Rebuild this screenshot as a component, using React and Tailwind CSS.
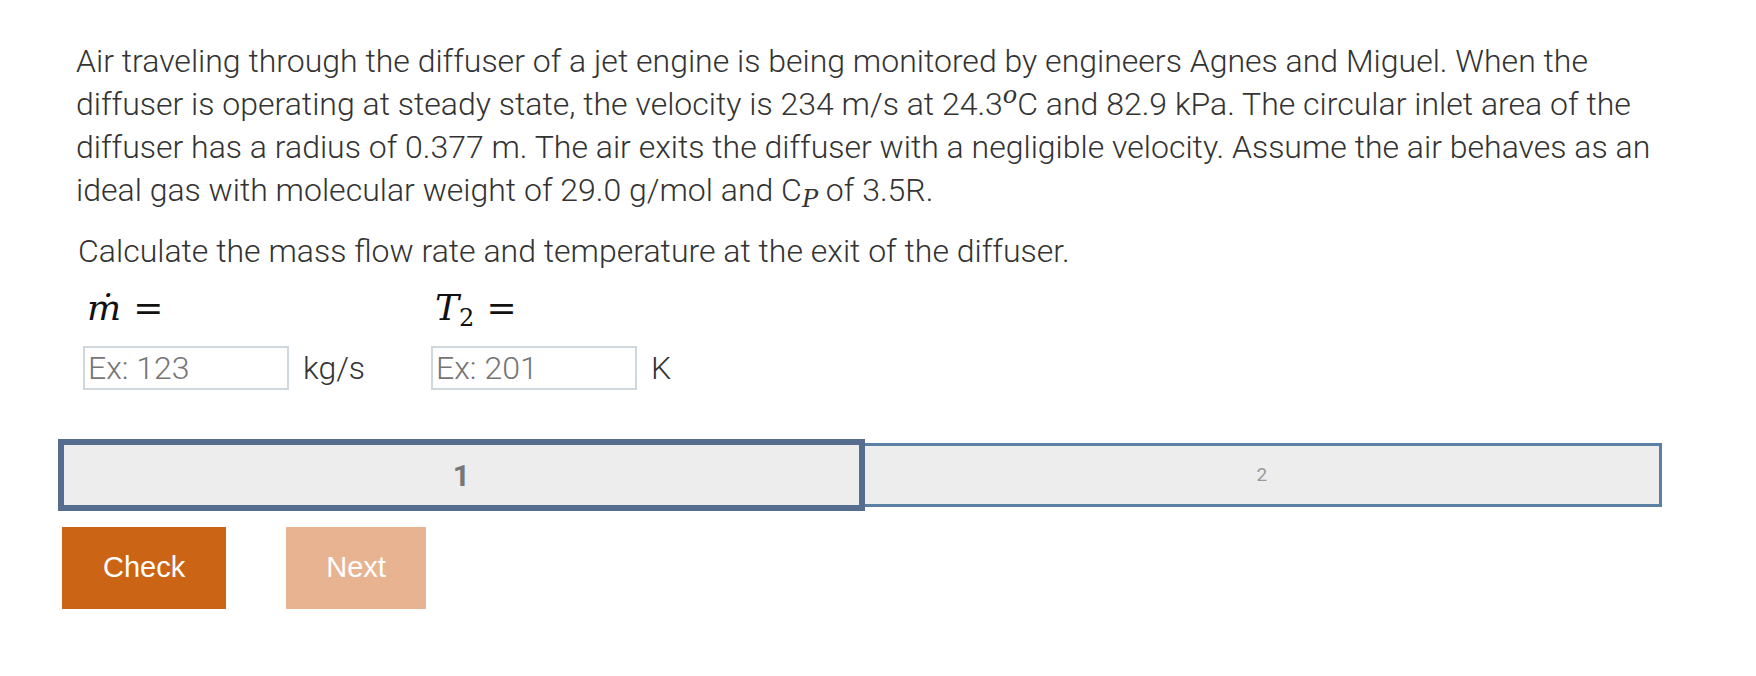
import { useState } from 'react';

const body = { fontFamily: 'Roboto, "Noto Sans", sans-serif' };
const math = { fontFamily: '"DejaVu Serif", "Liberation Serif", serif' };
const btn = { fontFamily: '"Liberation Sans", Arial, sans-serif' };

function Answer({ label, unit, placeholder }) {
    const [value, setValue] = useState('');
    return (
        <div className="flex flex-col">
            <div className="h-[44px] pl-[4px] text-[36px] leading-[44px] italic text-[#111] whitespace-nowrap" style={math}>
                {label}
            </div>
            <div className="mt-[14px] flex items-center">
                <input
                    value={value}
                    onChange={(e) => setValue(e.target.value)}
                    placeholder={placeholder}
                    className="w-[206px] h-[44px] border-2 border-[#cfd8dc] px-[3px] text-[32px] font-light text-[#333] placeholder:text-[#757575] outline-none"
                />
                <span className="ml-[14px] text-[32px] font-light text-[#333]">{unit}</span>
            </div>
        </div>
    );
}

export default function App() {
    const [level, setLevel] = useState(1);

    return (
        <div className="min-h-screen bg-white" style={body}>
            <div className="ml-[58px] w-[1604px] pt-[40px]">
                {/* question text */}
                <div className="pl-[18px] text-[32px] leading-[43px] font-light text-[#333]">
                    <p className="whitespace-nowrap">
                        Air traveling through the diffuser of a jet engine is being monitored by engineers Agnes and Miguel. When the<br />
                        diffuser is operating at steady state, the velocity is 234 m/s at 24.3<sup className="text-[24px] leading-[0] italic" style={math}>o</sup>C and 82.9 kPa. The circular inlet area of the<br />
                        diffuser has a radius of 0.377 m. The air exits the diffuser with a negligible velocity. Assume the air behaves as an<br />
                        ideal gas with molecular weight of 29.0 g/mol and C<sub className="text-[24px] leading-[0] italic" style={math}>P</sub> of 3.5R.
                    </p>
                    <p className="mt-[18px] pl-[2px]">Calculate the mass flow rate and temperature at the exit of the diffuser.</p>
                </div>

                {/* answers */}
                <div className="mt-[13px] pl-[25px] flex">
                    <Answer label={<span>m&#775;<span className="not-italic ml-[12px]">=</span></span>} unit="kg/s" placeholder="Ex: 123" />
                    <div className="ml-[66px]">
                        <Answer label={<span>T<sub className="not-italic text-[24px] leading-[0]">2</sub><span className="not-italic ml-[12px]">=</span></span>} unit="K" placeholder="Ex: 201" />
                    </div>
                </div>

                {/* levels */}
                <div className="mt-[50px] pl-[3px] flex items-center">
                    <button
                        onClick={() => setLevel(1)}
                        className="relative z-10 flex-1 h-[66px] bg-[#ededed] border-[3px] border-[#566d8f] shadow-[0_0_0_3px_#566d8f] flex items-center justify-center text-[30px] font-bold text-[#777]"
                    >
                        1
                    </button>
                    <button
                        onClick={() => setLevel(2)}
                        className="flex-1 h-[64px] bg-[#ededed] border-[3px] border-[#5a80a3] flex items-center justify-center text-[19px] text-[#999]"
                    >
                        2
                    </button>
                </div>

                {/* actions */}
                <div className="mt-[19px] pl-[4px] flex gap-[60px]" style={btn}>
                    <button className="h-[82px] px-[41px] bg-[#cc6415] text-white text-[29px]">Check</button>
                    <button className="h-[82px] px-[40px] bg-[#e8b391] text-white text-[29px]">Next</button>
                </div>
            </div>
        </div>
    );
}
